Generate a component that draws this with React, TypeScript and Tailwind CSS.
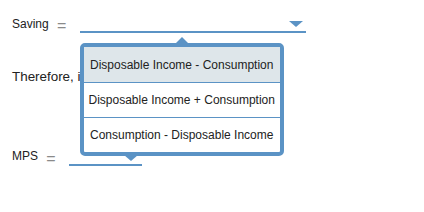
import React from "react";

const BLUE = "#5b93c5";

function Caret({ className }: { className: string }) {
  return (
    <svg className={className} width="14" height="7" viewBox="0 0 14 7">
      <path d="M0 7 L7 0 L14 7 Z" fill={BLUE} />
    </svg>
  );
}

function DownArrow({ className }: { className: string }) {
  return (
    <svg className={className} width="14" height="6" viewBox="0 0 14 6">
      <path d="M0 0 L14 0 L7 6 Z" fill={BLUE} />
    </svg>
  );
}

const options = [
  "Disposable Income - Consumption",
  "Disposable Income + Consumption",
  "Consumption - Disposable Income",
];

function Equals() {
  return (
    <span className="ml-2 mr-[13px] w-[10px] text-center text-[16px] leading-[14px] text-[#8a8a8a]">
      =
    </span>
  );
}

export default function App() {
  return (
    <div className="relative h-[212px] w-[424px] bg-white pl-3 font-['Liberation_Sans',Arial,sans-serif] text-[12px] leading-[14px] text-[#222]">
      {/* Saving row */}
      <div className="flex items-end pt-[9px]">
        <span className="pb-[2px]">Saving</span>
        <Equals />
        <div className="relative h-[24px] w-[226px] border-b-2 border-[#5b93c5]">
          <DownArrow className="absolute right-[3px] top-[12px]" />
          <div className="absolute left-0 top-[34px] z-10 w-[204px]">
            <Caret className="absolute left-1/2 top-[-6px] -translate-x-1/2" />
            <div className="relative overflow-hidden rounded-[5px] border-4 border-[#5b93c5] bg-white">
              {options.map((o, i) => (
                <div
                  key={o}
                  className={
                    i === 0
                      ? "flex h-[35px] items-center justify-center bg-[#dee6ea]"
                      : "flex h-[35px] items-center justify-center border-t border-[#5b93c5]"
                  }
                >
                  {o}
                </div>
              ))}
            </div>
          </div>
        </div>
      </div>

      <div className="mt-[37px] text-[13.4px]">Therefore, if</div>

      {/* MPS row */}
      <div className="mt-[58px] flex items-end">
        <span className="pb-[3px]">MPS</span>
        <Equals />
        <div className="relative h-[24px] w-[73px] border-b-2 border-[#5b93c5]">
          <DownArrow className="absolute right-[4px] top-[13px]" />
        </div>
      </div>
    </div>
  );
}
